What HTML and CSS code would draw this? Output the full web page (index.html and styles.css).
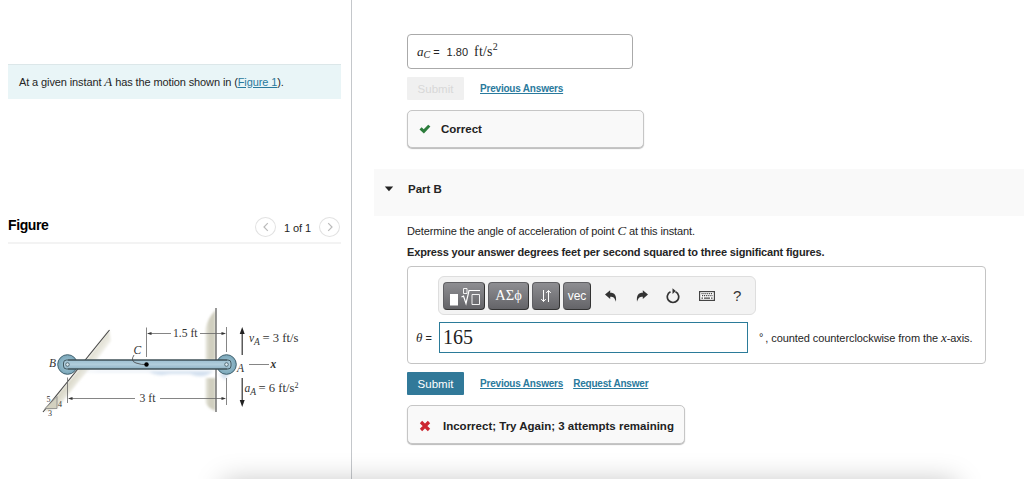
FILE: index.html
```html
<!DOCTYPE html>
<html lang="en">
<head>
    <meta charset="UTF-8">
    <meta name="viewport" content="width=device-width, initial-scale=1.0">
    <title>Part B</title>
    <link rel="stylesheet" href="styles.css">
</head>
<body>
    <div class="page">
        <aside class="left">
            <div class="problem">At a given instant <i class="math">A</i> has the motion shown in (<a href="#figure">Figure 1</a>).</div>

            <div class="figure-head" id="figure">
                <h2>Figure</h2>
                <div class="pager">
                    <button class="round"><svg width="8" height="10" viewBox="0 0 8 10"><path d="M5.8 1.2 2 5l3.8 3.8"/></svg></button>
                    <span>1 of 1</span>
                    <button class="round"><svg width="8" height="10" viewBox="0 0 8 10"><path d="M2.2 1.2 6 5 2.2 8.8"/></svg></button>
                </div>
            </div>

            <svg class="diagram" width="280" height="130" viewBox="30 300 280 130">
                <defs>
                    <linearGradient id="bar" x1="0" y1="0" x2="0" y2="1">
                        <stop offset="0" stop-color="#9dbfd0"/>
                        <stop offset=".5" stop-color="#b0cddb"/>
                        <stop offset="1" stop-color="#8fb3c5"/>
                    </linearGradient>
                    <linearGradient id="wall" x1="0" y1="0" x2="1" y2="0">
                        <stop offset="0" stop-color="#d5d3c2" stop-opacity=".5"/>
                        <stop offset=".4" stop-color="#d0cfbf"/>
                    </linearGradient>
                    <linearGradient id="slope" gradientUnits="userSpaceOnUse" x1="80" y1="362" x2="94" y2="372">
                        <stop offset="0" stop-color="#cfcdba"/>
                        <stop offset="1" stop-color="#e9e7dc" stop-opacity=".3"/>
                    </linearGradient>
                    <radialGradient id="wheel">
                        <stop offset="0" stop-color="#a9cbd8"/>
                        <stop offset="1" stop-color="#79a6b9"/>
                    </radialGradient>
                    <filter id="soft" x="-20%" y="-60%" width="140%" height="220%"><feGaussianBlur stdDeviation="1.5"/></filter>
                    <filter id="edge"><feGaussianBlur stdDeviation=".9"/></filter>
                </defs>

                <!-- inclined surface -->
                <path d="M109 330 L111 341 Q101 354 93 365 L80 380 Q66 397 58 408 L44 411 L86 361Z" fill="url(#slope)" filter="url(#edge)"/>
                <path d="M109.500 330 43 412" stroke="#444" stroke-width="1.100" fill="none"/>
                <path d="M45 408.500 57 396.500V408.500Z" fill="#d3d1c0" stroke="#888" stroke-width=".8"/>

                <!-- wall -->
                <path d="M215.500 310 Q207 319 205.500 329V360H215.500ZM205.500 378V402Q207 408 215.500 411V378Z" fill="url(#wall)" filter="url(#edge)"/>
                <path d="M216 308V412" stroke="#555" stroke-width="1.200"/>

                <!-- bar and rollers -->
                <path d="M75 371H214L207 375Q200 378 190 374H169Q158 377 149 372H100ZM219 374 225 380 230 372Z" fill="#d3e0ef" filter="url(#soft)"/>
                <g fill="url(#wheel)" stroke="#3f606e" stroke-width="1">
                    <circle cx="67.500" cy="364.500" r="9.800"/>
                    <circle cx="226.500" cy="364.500" r="9.800"/>
                </g>
                <rect x="63.500" y="360" width="167.500" height="9" rx="3" fill="url(#bar)" stroke="#41575f" stroke-width="1"/>
                <path d="M68 360H227M68 369H227" stroke="#3e4e55" stroke-width="1.200"/>
                <g fill="#dce9ef" stroke="#3c5560" stroke-width=".8">
                    <circle cx="67.500" cy="364.500" r="1.800"/>
                    <circle cx="226.500" cy="364.500" r="1.800"/>
                </g>

                <!-- dimension lines -->
                <path d="M146.500 327.500V357M226.500 327V352M67.500 377.500V403M226.500 378V405M150 333.500H171M200 333.500H224M69 398.500H135M160 398.500H224M249 364.500H269" stroke="#666" stroke-width=".8" fill="none"/>
                <path d="M147 333.500 151.500 331.900V335.100ZM226 333.500 221.500 331.900V335.100ZM68 398.500 72.500 396.900V400.100ZM226 398.500 221.500 396.900V400.100Z" fill="#333"/>
                <path d="M242.200 355V331M242.200 378V402" stroke="#333" stroke-width="1.200"/>
                <path d="M242.200 327 244.700 334H239.700ZM242.200 407 244.700 400H239.700Z" fill="#222"/>
                <path d="M134 355Q130 361 136 363T146 364.500" stroke="#444" stroke-width=".8" fill="none"/>
                <circle cx="146.500" cy="364.500" r="2.200" fill="#000"/>

                <g class="label">
                    <text x="173" y="337" textLength="24.500" lengthAdjust="spacingAndGlyphs">1.5 ft</text>
                    <text x="139.500" y="402" textLength="16" lengthAdjust="spacingAndGlyphs">3 ft</text>
                    <text x="49" y="367" class="it">B</text>
                    <text x="133.500" y="354" class="it">C</text>
                    <text x="237" y="371.500" class="it">A</text>
                    <text x="270.500" y="368" class="it strong">x</text>
                    <text x="249" y="342"><tspan class="it">v</tspan><tspan class="it sub" dy="3">A</tspan></text>
                    <text x="262.500" y="342" textLength="36" lengthAdjust="spacingAndGlyphs">= 3 ft/s</text>
                    <text x="244.500" y="392"><tspan class="it">a</tspan><tspan class="it sub" dy="3">A</tspan></text>
                    <text x="258.500" y="392" textLength="36" lengthAdjust="spacingAndGlyphs">= 6 ft/s</text>
                    <text x="294.500" y="388" class="small">2</text>
                    <text x="46.500" y="402" class="small">5</text>
                    <text x="58" y="406.500" class="small">4</text>
                    <text x="48" y="415.500" class="small">3</text>
                </g>
            </svg>
        </aside>

        <main class="right">
            <div class="result"><i class="math">a<sub>C</sub></i><span class="eq">=</span><span class="num">1.80</span><span class="unit">ft/s<sup>2</sup></span></div>
            <div class="actions">
                <button class="submit disabled" disabled>Submit</button>
                <a href="#">Previous Answers</a>
            </div>
            <div class="feedback correct">
                <svg width="12" height="10" viewBox="0 0 12 10"><path d="M.5 5.500 2.600 3.200 4.700 5.200 9.200.7 11.400 2.600 4.900 9.500Z" fill="#2c7d3c"/></svg>
                <span>Correct</span>
            </div>

            <div class="part-head">
                <svg width="10" height="6" viewBox="0 0 10 6"><path d="M.8.500H9.200L5 5.300Z" fill="#222"/></svg>
                <h3>Part B</h3>
            </div>

            <p class="question">Determine the angle of acceleration of point <i class="math">C</i> at this instant.</p>
            <p class="hint">Express your answer degrees feet per second squared to three significant figures.</p>

            <div class="answer">
                <div class="toolbar">
                    <button class="tool w42">
                        <svg width="34" height="22" viewBox="0 0 34 22" fill="none" stroke="#fff">
                            <path d="M3 9H11V20.500H3Z" fill="#fff" stroke="none"/>
                            <path d="M14.500 12 16.500 11 19 18.500 22 5.500H33" stroke-width="1.200"/>
                            <path d="M16.500 3.500H20V8.500H16.500ZM25 9.500H32.500V19.500H25Z" stroke-width=".9"/>
                        </svg>
                    </button>
                    <button class="tool w41 greek">ΑΣϕ</button>
                    <button class="tool w28">
                        <svg width="12" height="14" viewBox="0 0 12 14" fill="none" stroke="#fff"><path d="M3.500 1V12.500M1.200 10 3.500 12.500 5.800 10M8.500 13V1.500M6.200 4 8.500 1.500 10.800 4"/></svg>
                    </button>
                    <button class="tool w28 vec">vec</button>
                    <div class="plain">
                        <svg width="12" height="12" viewBox="0 0 12 12"><path d="M0 4.600 5.200.2V2.800C9.500 2.800 11.700 5 11 11.700 9.800 8 8.500 6.700 5.200 6.700V9Z" fill="#333"/></svg>
                        <svg width="12" height="12" viewBox="0 0 12 12"><path d="M12 4.600 6.800.2V2.800C2.500 2.800.3 5 1 11.700 2.200 8 3.500 6.700 6.800 6.700V9Z" fill="#333"/></svg>
                        <svg width="14" height="16" viewBox="0 0 14 16"><path d="M9.500 3.700A5.700 5.700 0 1 1 4.500 3.700" fill="none" stroke="#333" stroke-width="1.700"/><path d="M6.500.2 9.800 3 6.500 6Z" fill="#333"/></svg>
                        <svg width="16" height="10" viewBox="0 0 16 10"><rect x=".6" y=".6" width="14.800" height="8.800" fill="#fff" stroke="#444" stroke-width="1.200"/><path d="M2.500 2.700H13.500M3 4.700H13.500" stroke="#444" stroke-width="1.200" stroke-dasharray="1.100 .8"/><path d="M2.500 7.100H4M5 7.100H11M12 7.100H13.500" stroke="#444" stroke-width="1.200"/></svg>
                        <span>?</span>
                    </div>
                </div>
                <div class="entry">
                    <label for="theta"><i class="math">θ</i> =</label>
                    <input type="text" id="theta" value="165">
                    <span class="after"><span class="deg">°</span>, counted counterclockwise from the <i class="math">x</i>-axis.</span>
                </div>
            </div>

            <div class="actions second">
                <button class="submit">Submit</button>
                <a href="#">Previous Answers</a>
                <a href="#">Request Answer</a>
            </div>
            <div class="feedback incorrect">
                <svg width="12" height="12" viewBox="0 0 12 12"><path d="M2 2 10 10M10 2 2 10" stroke="#cc2630" stroke-width="3.300"/></svg>
                <span>Incorrect; Try Again; 3 attempts remaining</span>
            </div>
        </main>
    </div>
    <div class="bottom-shade"></div>
</body>
</html>
```

FILE: styles.css
```css
* {
    box-sizing: border-box;
}

body {
    margin: 0;
    height: 479px;
    overflow: hidden;
    position: relative;
    background: #fff;
    color: #252525;
    font-family: "Liberation Sans", Arial, sans-serif;
    font-size: 11px;
}

h2, h3, p {
    margin: 0;
}

a {
    color: #2a7a9d;
}

button {
    font-family: inherit;
    border: none;
    padding: 0;
}

svg {
    flex: none;
}

.math {
    font-family: "Liberation Serif", "Times New Roman", serif;
    font-size: 13px;
    line-height: 1;
}

.page {
    display: flex;
    height: 479px;
}

.left {
    width: 352px;
    flex: none;
    padding: 64px 10px 0 8px;
    border-right: 1px solid #c4c7cb;
}

.problem {
    height: 35px;
    padding-left: 11px;
    line-height: 34px;
    background: #e9f5f7;
    border-top: 1px solid #dce7e9;
    letter-spacing: -0.11px;
    white-space: nowrap;
}

.figure-head {
    display: flex;
    justify-content: space-between;
    height: 34px;
    margin-top: 111px;
    border-bottom: 2px solid #f3f3f3;
}

.figure-head h2 {
    color: #000;
    font-size: 14px;
    line-height: 31px;
    letter-spacing: -0.4px;
}

.pager {
    display: flex;
    align-items: center;
    height: 34px;
    gap: 8px;
    padding-right: 1px;
}

.pager span {
    padding-top: 2px;
    letter-spacing: -0.1px;
}

.round {
    display: flex;
    align-items: center;
    justify-content: center;
    width: 21px;
    height: 20px;
    border: 1px solid #e2e2e2;
    border-radius: 50%;
    background: #fff;
}

.round path {
    fill: none;
    stroke: #bbb;
    stroke-width: 1.2;
}

.diagram {
    display: block;
    margin: 56px 0 0 22px;
}

.label {
    font-family: "Liberation Serif", "Times New Roman", serif;
    font-size: 11.5px;
    fill: #333;
}

.it {
    font-style: italic;
}

.sub {
    font-size: 9.5px;
}

.small {
    font-size: 8px;
}

.strong {
    font-weight: bold;
}

.right {
    flex: 1;
    padding: 34px 0 0 55px;
}

.result {
    display: flex;
    align-items: center;
    width: 226px;
    height: 35px;
    padding-left: 9px;
    border: 1px solid #aaa;
    border-radius: 4px;
}

.result sub {
    font-size: 10px;
    line-height: 0;
    vertical-align: -2px;
}

.eq {
    margin: 0 7px 0 3px;
}

.unit {
    margin-left: 6px;
    font-family: "Liberation Serif", "Times New Roman", serif;
    font-size: 14px;
    letter-spacing: 0.2px;
}

.unit sup {
    font-size: 10px;
    line-height: 0;
}

.actions {
    display: flex;
    align-items: center;
    gap: 10px;
    height: 23px;
    margin-top: 8px;
}

.actions a {
    margin-top: -1px;
    font-size: 10px;
    font-weight: bold;
    letter-spacing: -0.2px;
}

.submit {
    width: 57px;
    height: 23px;
    margin-right: 6px;
    border-radius: 1px;
    background: #317999;
    color: #fff;
    font-size: 11.5px;
}

.submit.disabled {
    background: #f0f0f0;
    color: #d8d8d8;
}

.feedback {
    display: flex;
    align-items: center;
    height: 38px;
    padding-left: 11px;
    border: 1px solid #c6c6c6;
    border-radius: 5px;
    box-shadow: 0 1px 1px #bbb;
    background: #f9f9f9;
    color: #222;
    font-size: 11.5px;
    font-weight: bold;
}

.correct {
    width: 237px;
    margin-top: 10px;
    gap: 10px;
}

.part-head {
    display: flex;
    align-items: center;
    gap: 14px;
    height: 47px;
    margin: 21px 0 0 -33px;
    padding: 0 0 7px 10px;
    background: #f9f9f9;
}

.part-head h3 {
    font-size: 11.5px;
}

.question {
    height: 22px;
    margin-top: 4px;
    line-height: 22px;
    letter-spacing: -0.12px;
    white-space: nowrap;
}

.hint {
    height: 22px;
    line-height: 21px;
    font-weight: bold;
    letter-spacing: -0.16px;
    white-space: nowrap;
}

.answer {
    width: 579px;
    height: 98px;
    margin-top: 2px;
    padding: 9px 0 0 8px;
    border: 1px solid #c4c4c4;
    border-radius: 4px;
}

.toolbar {
    display: flex;
    align-items: center;
    gap: 3px;
    width: 318px;
    height: 39px;
    margin-left: 22px;
    padding-left: 4px;
    border: 1px solid #dedede;
    border-radius: 6px;
    background: #f3f3f3;
}

.tool {
    display: flex;
    align-items: center;
    justify-content: center;
    height: 28px;
    border: 1px solid #606064;
    border-right-color: #333;
    border-bottom-color: #333;
    border-radius: 4px;
    background: linear-gradient(#8e8e92, #646468);
    color: #fff;
}

.w42 {
    width: 42px;
}

.w41 {
    width: 41px;
}

.w28 {
    width: 28px;
}

.greek {
    font-family: "Liberation Serif", "Times New Roman", serif;
    font-size: 14.5px;
}

.vec {
    font-size: 12px;
}

.plain {
    display: flex;
    align-items: center;
    gap: 18.5px;
    margin-left: 11px;
    color: #333;
    font-size: 15px;
}

.entry {
    display: flex;
    align-items: center;
    height: 31px;
    margin-top: 7px;
}

.entry label {
    width: 23px;
    white-space: nowrap;
}

.entry input {
    width: 309px;
    height: 31px;
    padding: 0 3px;
    border: 1px solid #2b7b99;
    color: #222;
    font-family: "Liberation Serif", "Times New Roman", serif;
    font-size: 20px;
}

.after {
    margin-left: 11px;
    letter-spacing: -0.08px;
    white-space: nowrap;
}

.deg {
    margin-right: 2px;
    vertical-align: 1px;
}

.second {
    margin-top: 8px;
}

.incorrect {
    width: 278px;
    height: 39px;
    margin-top: 10px;
    padding-top: 2px;
    gap: 12px;
    white-space: nowrap;
}

/* shade along the lower edge of the window */
.bottom-shade {
    position: absolute;
    left: 185px;
    right: 30px;
    bottom: 0;
    height: 34px;
    overflow: hidden;
}

.bottom-shade::after {
    content: "";
    display: block;
    height: 40px;
    margin: 37px 38px 0;
    box-shadow: 0 0 28px rgba(0, 0, 0, 0.25);
}
```
